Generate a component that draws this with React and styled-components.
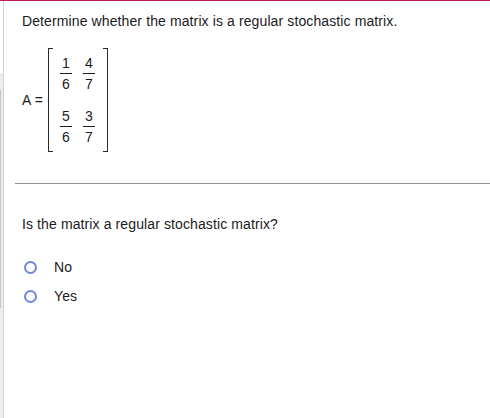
import React from "react";
import styled, { createGlobalStyle } from "styled-components";

const Global = createGlobalStyle`
  html, body { margin: 0; padding: 0; background: #fff; }
  body { font-family: "Liberation Sans", Arial, sans-serif; color: #1b1b1b; }
`;

const Page = styled.div`
  width: 490px;
  height: 418px;
  box-sizing: border-box;
  border-top: 1px solid #c21a52;
  display: flex;
  overflow: hidden;
`;

const Rail = styled.div`
  width: 4px;
  flex: none;
  display: flex;
  flex-direction: column;
  border-right: 1px solid #d2d2d2;
  box-sizing: border-box;
`;

const RailTop = styled.div`
  height: 72px;
  flex: none;
`;

const RailTrack = styled.div`
  flex: 1;
  background: #ededed;
  padding-top: 17px;
`;

const RailThumb = styled.div`
  width: 1px;
  height: 218px;
  background: #c4c4c4;
`;

const Content = styled.div`
  flex: 1;
  padding-left: 11px;
  font-size: 14px;
  letter-spacing: 0.11px;
`;

const Section = styled.div`
  padding-left: 7px;
`;

const Heading = styled.div`
  line-height: 18px;
  margin-top: 11px;
`;

const MatrixRow = styled.div`
  display: flex;
  align-items: center;
  margin-top: 18px;
`;

const Label = styled.span`
  line-height: 16px;
  margin-right: 5px;
  white-space: pre;
`;

const Bracket = styled.div`
  width: 4px;
  align-self: stretch;
  border: 1px solid #2a2a2a;
  ${(p) => (p.$side === "left" ? "border-right: none;" : "border-left: none;")}
`;

const Matrix = styled.div`
  display: flex;
  height: 104px;
  box-sizing: border-box;
`;

const Grid = styled.div`
  display: grid;
  grid-template-columns: repeat(2, auto);
  column-gap: 11px;
  row-gap: 16px;
  padding: 7px 8px 7px 7px;
`;

const Fraction = styled.div`
  display: flex;
  flex-direction: column;
  align-items: stretch;
  text-align: center;
  width: 12px;
`;

const Num = styled.span`
  line-height: 16px;
`;

const Bar = styled.div`
  height: 1px;
  background: #1b1b1b;
  margin: 2px 0;
`;

const Divider = styled.div`
  height: 1px;
  background: #8b9097;
  margin-top: 31px;
`;

const Question = styled.div`
  line-height: 18px;
  margin-top: 31px;
`;

const Options = styled.div`
  display: flex;
  flex-direction: column;
  gap: 11px;
  margin-top: 25px;
`;

const Option = styled.label`
  display: flex;
  align-items: center;
  line-height: 18px;
`;

const Radio = styled.span`
  width: 13px;
  height: 13px;
  box-sizing: border-box;
  border: 2px solid #7086d8;
  border-radius: 50%;
  margin-left: 2px;
  margin-right: 17px;
  flex: none;
`;

const frac = (n, d) => (
  <Fraction>
    <Num>{n}</Num>
    <Bar />
    <Num>{d}</Num>
  </Fraction>
);

export default function App() {
  return (
    <>
      <Global />
      <Page>
        <Rail>
          <RailTop />
          <RailTrack>
            <RailThumb />
          </RailTrack>
        </Rail>
        <Content>
          <Section>
            <Heading>Determine whether the matrix is a regular stochastic matrix.</Heading>
            <MatrixRow>
              <Label>A =</Label>
              <Matrix>
                <Bracket $side="left" />
                <Grid>
                  {frac("1", "6")}
                  {frac("4", "7")}
                  {frac("5", "6")}
                  {frac("3", "7")}
                </Grid>
                <Bracket $side="right" />
              </Matrix>
            </MatrixRow>
          </Section>
          <Divider />
          <Section>
            <Question>Is the matrix a regular stochastic matrix?</Question>
            <Options>
              <Option>
                <Radio />
                No
              </Option>
              <Option>
                <Radio />
                Yes
              </Option>
            </Options>
          </Section>
        </Content>
      </Page>
    </>
  );
}
